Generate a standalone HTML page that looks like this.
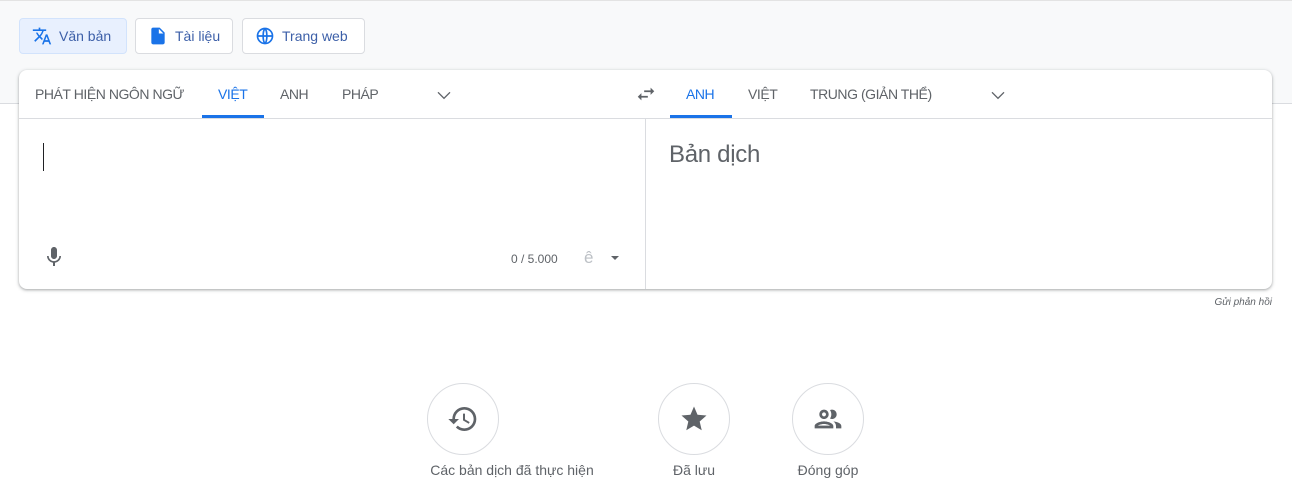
<!DOCTYPE html>
<html><head><meta charset="utf-8"><style>
*{box-sizing:border-box;margin:0;padding:0}
body{width:1292px;height:485px;background:#fff;font-family:"Liberation Sans",Arial,sans-serif;position:relative;overflow:hidden}
.top{position:absolute;left:0;top:0;width:1292px;height:104px;background:#f8f9fa;border-top:1px solid #e3e3e3;border-bottom:1px solid #dadce0}
.btn{position:absolute;top:18px;height:36px;border:1px solid #dadce0;border-radius:4px;background:#fff;color:#1a73e8;font-size:14px;display:flex;align-items:center;padding-left:12px}
.btn svg{margin-right:7px}
.btn span{color:#3c5fa8}
.card{position:absolute;left:19px;top:70px;width:1253px;height:219px;background:#fff;border-radius:8px;box-shadow:0 1px 2px rgba(60,64,67,.3),0 1px 3px 1px rgba(60,64,67,.15)}
.tabs{position:absolute;left:0;top:0;width:100%;height:49px;border-bottom:1px solid #dadce0}
.t{position:absolute;top:16px;font-size:14px;color:#5f6368;letter-spacing:-0.45px}
.t.a{color:#1a73e8}
.ul{position:absolute;top:45px;height:3px;background:#1a73e8}
.div{position:absolute;left:626px;top:49px;width:1px;height:170px;background:#dadce0}
.circ{position:absolute;top:383px;width:72px;height:72px;border:1px solid #dadce0;border-radius:50%;display:flex;align-items:center;justify-content:center}
.lab{position:absolute;top:462px;font-size:14px;color:#5f6368;text-align:center}
</style></head><body>
<div class="top"></div>
<div class="btn" style="left:19px;width:108px;background:#e8f0fe;border-color:#d2e3fc"><svg width="20" height="20" viewBox="0 0 24 24"><path fill="#1a73e8" d="M12.87 15.07l-2.54-2.51.03-.03A17.5 17.5 0 0014.07 6H17V4h-7V2H8v2H1v2h11.17C11.5 7.920 10.44 9.75 9 11.35 8.07 10.32 7.3 9.19 6.69 8h-2c.73 1.63 1.73 3.17 2.98 4.56l-5.09 5.02L4 19l5-5 3.11 3.110.76-2.04zM18.5 10h-2L12 22h2l1.12-3h4.75L21 22h2l-4.5-12zm-2.62 7l1.62-4.33L19.12 17h-3.24z"/></svg><span>Văn bản</span></div>
<div class="btn" style="left:135px;width:98px"><svg width="20" height="20" viewBox="0 0 24 24"><path fill="#1a73e8" d="M14 2H6c-1.1 0-2 .9-2 2v16c0 1.1.9 2 2 2h12c1.1 0 2-.9 2-2V8l-6-6zm-1 7V3.5L18.5 9H13z"/></svg><span>Tài liệu</span></div>
<div class="btn" style="left:242px;width:123px"><svg width="20" height="20" viewBox="0 0 24 24" fill="none" stroke="#1a73e8" stroke-width="2"><circle cx="12" cy="12" r="9"/><path d="M3 12h18M12 3c3 3 3 15 0 18M12 3c-3 3-3 15 0 18"/></svg><span>Trang web</span></div>
<div class="card">
<div class="tabs">
<div class="t" style="left:16px">PHÁT HIỆN NGÔN NGỮ</div>
<div class="t a" style="left:199px">VIỆT</div>
<div class="ul" style="left:183px;width:62px"></div>
<div class="t" style="left:261px">ANH</div>
<div class="t" style="left:323px">PHÁP</div>
<svg style="position:absolute;left:417px;top:17px" width="16" height="16" viewBox="0 0 24 24"><path d="M3 8l9 9 9-9" fill="none" stroke="#5f6368" stroke-width="2"/></svg>
<svg style="position:absolute;left:616px;top:13px" width="22" height="22" viewBox="0 0 24 24"><path fill="#5f6368" d="M6.99 11L3 15l3.99 4v-3H14v-2H6.99v-3zM21 9l-3.99-4v3H10v2h7.01v3L21 9z"/></svg>
<div class="t a" style="left:667px">ANH</div>
<div class="ul" style="left:651px;width:62px"></div>
<div class="t" style="left:729px">VIỆT</div>
<div class="t" style="left:791px">TRUNG (GIẢN THỂ)</div>
<svg style="position:absolute;left:971px;top:17px" width="16" height="16" viewBox="0 0 24 24"><path d="M3 8l9 9 9-9" fill="none" stroke="#5f6368" stroke-width="2"/></svg>
</div>
<div style="position:absolute;left:24px;top:73px;width:1px;height:28px;background:#202124"></div>
<svg style="position:absolute;left:23px;top:175px" width="24" height="24" viewBox="0 0 24 24"><path fill="#5f6368" d="M12 14c1.66 0 3-1.34 3-3V5c0-1.66-1.34-3-3-3S9 3.34 9 5v6c0 1.660 1.34 3 3 3zm5.3-3c0 3-2.54 5.1-5.3 5.1S6.7 14 6.7 11H5c0 3.41 2.72 6.23 6 6.72V21h2v-3.28c3.28-.48 6-3.3 6-6.72h-1.7z"/></svg>
<div style="position:absolute;left:492px;top:182px;font-size:12px;color:#5f6368">0 / 5.000</div>
<div style="position:absolute;left:565px;top:178px;font-size:17px;color:#bdc1c6">ê</div>
<div style="position:absolute;left:592px;top:186px;width:0;height:0;border-left:4px solid transparent;border-right:4px solid transparent;border-top:4px solid #5f6368"></div>
<div class="div"></div>
<div style="position:absolute;left:650px;top:71px;font-size:24px;color:#5f6368;letter-spacing:-0.3px">Bản dịch</div>
</div>
<div style="position:absolute;right:20px;top:297px;font-size:10px;font-style:italic;color:#5f6368">Gửi phản hồi</div>
<div class="circ" style="left:427px"><svg width="32" height="32" viewBox="0 0 24 24"><path fill="#5f6368" d="M13 3a9 9 0 00-9 9H1l3.89 3.89.07.14L9 12H6c0-3.87 3.13-7 7-7s7 3.13 7 7-3.13 7-7 7c-1.93 0-3.68-.79-4.94-2.06l-1.42 1.42A8.954 8.954 0 0013 21a9 9 0 000-18zm-1 5v5l4.28 2.54.72-1.21-3.5-2.08V8H12z"/></svg></div>
<div class="lab" style="left:411px;width:202px">Các bản dịch đã thực hiện</div>
<div class="circ" style="left:658px"><svg width="30" height="30" viewBox="0 0 24 24"><path fill="#5f6368" d="M12 17.27L18.18 21l-1.64-7.03L22 9.24l-7.19-.61L12 2 9.19 8.63 2 9.24l5.46 4.73L5.82 21z"/></svg></div>
<div class="lab" style="left:644px;width:100px">Đã lưu</div>
<div class="circ" style="left:792px"><svg width="32" height="32" viewBox="0 0 24 24"><path fill="#5f6368" d="M9 12c1.93 0 3.5-1.57 3.5-3.5S10.93 5 9 5 5.5 6.57 5.5 8.5 7.07 12 9 12zm0-5c.83 0 1.5.67 1.5 1.5S9.83 10 9 10s-1.5-.67-1.5-1.5S8.17 7 9 7zm0 6.75c-2.34 0-7 1.17-7 3.5V19h14v-1.75c0-2.33-4.66-3.5-7-3.5zM4.34 17c.84-.58 2.87-1.25 4.66-1.25s3.82.67 4.66 1.25H4.34zM16.04 13.81c1.16.84 1.96 1.96 1.96 3.44V19h4v-1.75c0-2.020-3.5-3.170-5.96-3.44zM15 12c1.93 0 3.5-1.57 3.5-3.5S16.93 5 15 5c-.54 0-1.04.13-1.5.35.63.89 1 1.98 1 3.15s-.37 2.26-1 3.15c.46.22.96.35 1.5.35z"/></svg></div>
<div class="lab" style="left:778px;width:100px">Đóng góp</div>
</body></html>
